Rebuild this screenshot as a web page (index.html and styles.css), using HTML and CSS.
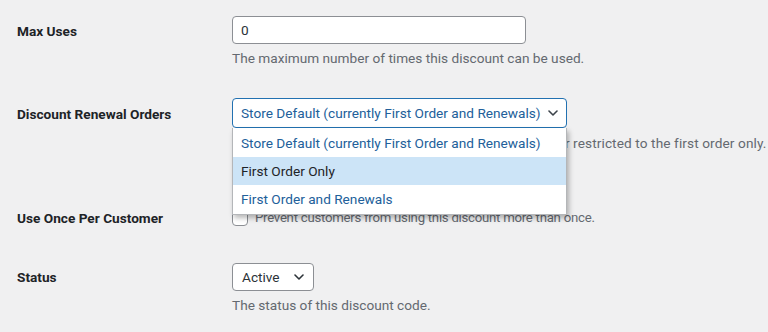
FILE: index.html
```html
<!DOCTYPE html>
<html lang="en">
<head>
<meta charset="utf-8">
<title>Discount settings</title>
<link rel="stylesheet" href="styles.css">
</head>
<body>
<div class="form">
  <div class="row row-uses">
    <div class="label">Max Uses</div>
    <div class="input">0</div>
    <p class="desc">The maximum number of times this discount can be used.</p>
  </div>

  <div class="row row-renewal">
    <div class="label">Discount Renewal Orders</div>
    <div class="field">
      <div class="select select-focus">
        <span>Store Default (currently First Order and Renewals)</span>
        <svg class="chev" width="10" height="6" viewBox="0 0 10 6"><path d="M1 1l4 4 4-4" fill="none" stroke="currentColor" stroke-width="1.6" stroke-linecap="round" stroke-linejoin="round"/></svg>
      </div>
      <ul class="menu">
        <li class="opt">Store Default (currently First Order and Renewals)</li>
        <li class="opt opt-active">First Order Only</li>
        <li class="opt">First Order and Renewals</li>
      </ul>
    </div>
    <p class="desc desc-wide">Whether this discount applies to every renewal order or restricted to the first order only.</p>
  </div>

  <div class="row row-once">
    <div class="label">Use Once Per Customer</div>
    <div class="check-line">
      <span class="checkbox"></span>
      <span class="check-text">Prevent customers from using this discount more than once.</span>
    </div>
  </div>

  <div class="row row-status">
    <div class="label">Status</div>
    <div class="select select-small">
      <span>Active</span>
      <svg class="chev" width="10" height="6" viewBox="0 0 10 6"><path d="M1 1l4 4 4-4" fill="none" stroke="currentColor" stroke-width="1.6" stroke-linecap="round" stroke-linejoin="round"/></svg>
    </div>
    <p class="desc">The status of this discount code.</p>
  </div>
</div>
</body>
</html>
```

FILE: styles.css
```css
html, body {
  margin: 0;
  padding: 0;
  background: #f0f0f1;
}
body {
  font-family: Roboto, "Liberation Sans", sans-serif;
  font-size: 13.65px;
  color: #1d2327;
  width: 768px;
  height: 332px;
  overflow: hidden;
}
.form {
  padding-left: 17px;
  display: flex;
  flex-direction: column;
}
.row {
  display: grid;
  grid-template-columns: 215px auto;
  justify-content: start;
}
.row-uses { margin-top: 16px; }
.row-renewal { margin-top: 30px; }
.row-once { margin-top: 54px; }
.row-status { margin-top: 35px; }

.label {
  grid-column: 1;
  grid-row: 1;
  align-self: center;
  font-weight: 700;
  line-height: 20px;
  padding-top: 1px;
}
.row-status .label { padding-top: 0; }
.desc {
  grid-column: 2;
  grid-row: 2;
  margin: 4px 0 0;
  line-height: 20px;
  color: #646970;
  white-space: nowrap;
}
.row-renewal .desc { margin-top: 5px; }
.desc-wide { letter-spacing: 0.1px; }

.input {
  grid-column: 2;
  grid-row: 1;
  width: 294px;
  height: 28px;
  box-sizing: border-box;
  border: 1px solid #8c8f94;
  border-radius: 4px;
  background: #fff;
  padding: 0 8px;
  line-height: 26px;
  color: #2c3338;
}
.field {
  grid-column: 2;
  grid-row: 1;
  position: relative;
}
.select {
  grid-column: 2;
  grid-row: 1;
  display: flex;
  align-items: center;
  justify-content: space-between;
  box-sizing: border-box;
  border: 1px solid #8c8f94;
  border-radius: 4px;
  background: #fff;
  color: #2c3338;
  white-space: nowrap;
}
.select-focus {
  width: 335px;
  height: 30px;
  padding: 0 8px 0 8px;
  border-color: #2271b1;
  color: #22609a;
}
.select-focus .chev { color: #3c434a; }
.select-small {
  width: 82px;
  height: 28px;
  padding: 0 9px 0 9px;
}
.chev { display: block; flex: none; }

.menu {
  position: absolute;
  left: 0;
  top: 30px;
  width: 335px;
  box-sizing: border-box;
  margin: 0;
  padding: 1px 0 1px;
  list-style: none;
  background: #fff;
  border: 1px solid #b4b6b9;
  border-top: none;
  box-shadow: 2px 3px 5px rgba(0, 0, 0, 0.28);
  z-index: 2;
}
.opt {
  height: 28px;
  line-height: 28px;
  padding: 0 8px;
  color: #22609a;
  white-space: nowrap;
}
.opt-active {
  background: #cce4f7;
  color: #1d2327;
}

.check-line {
  grid-column: 2;
  grid-row: 1;
  display: flex;
  align-items: center;
  line-height: 20px;
  color: #646970;
}
.check-text {
  font-size: 13.2px;
  letter-spacing: -0.25px;
}
.checkbox {
  width: 16px;
  height: 16px;
  box-sizing: border-box;
  border: 1px solid #8c8f94;
  border-radius: 4px;
  background: #fff;
  margin-right: 7px;
  flex: none;
}
```
